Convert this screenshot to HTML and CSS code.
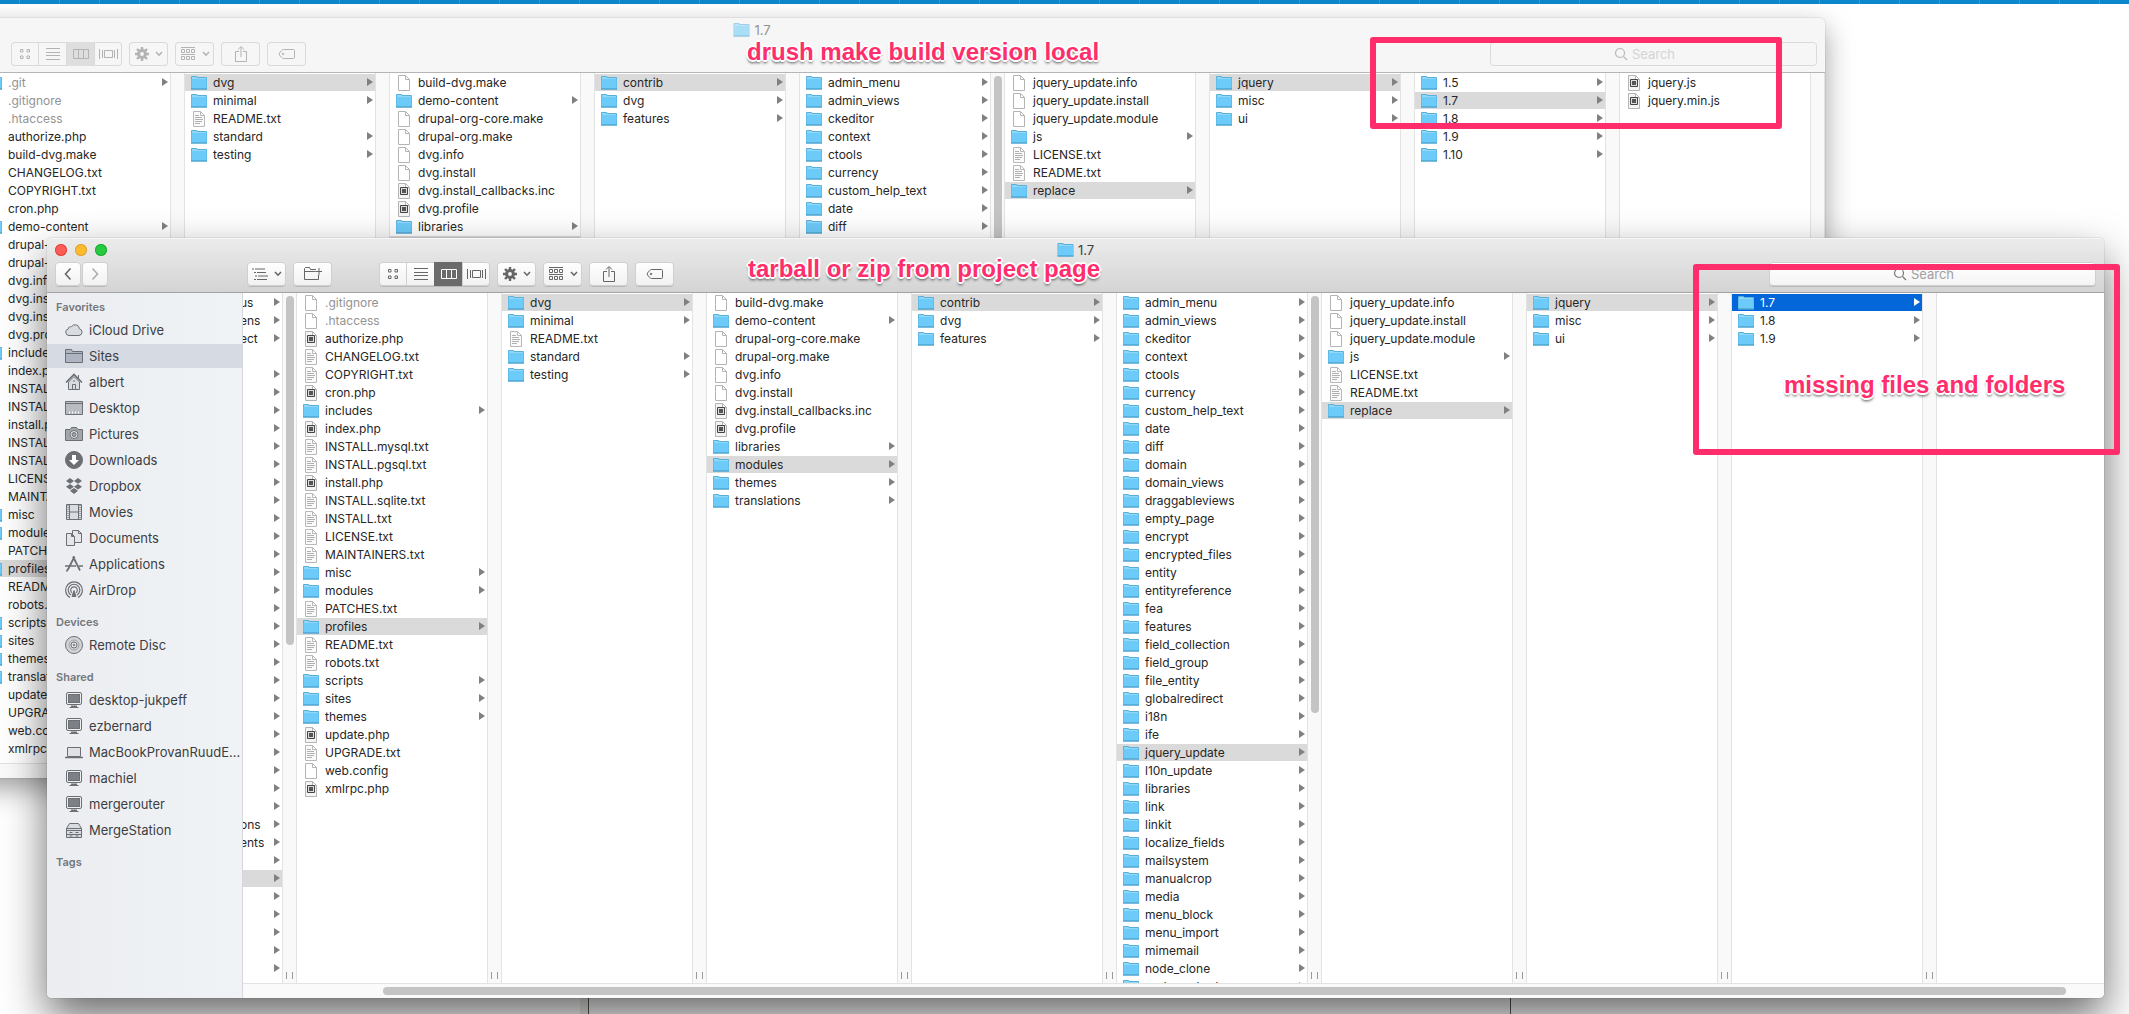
FILE: index.html
```
<!DOCTYPE html>
<html lang="en">
<head>
<meta charset="utf-8">
<meta name="viewport" content="width=device-width, initial-scale=1">
<title>1.7</title>
<link rel="stylesheet" href="styles.css">
</head>
<body>
<svg class="symbols" aria-hidden="true">
  <symbol id="i-grid" viewBox="0 0 12 12"><path d="M1.5 1.5h2.500v2.500h-2.500zM8 1.500h2.500v2.500h-2.500zM1.500 8h2.500v2.500h-2.500zM8 8h2.500v2.500h-2.500z"/></symbol>
  <symbol id="i-list" viewBox="0 0 14 12"><path d="M0 .5h14M0 4.500h14M0 7.500h14M0 11.500h14"/></symbol>
  <symbol id="i-columns" viewBox="0 0 16 12"><path d="M.5 1.500h15v9H.5zM5.500 1.500v9M10.500 1.500v9"/></symbol>
  <symbol id="i-flow" viewBox="0 0 20 12"><path d="M5.500 2.500h8v7h-8zM.5 1v10M3.500 2v8M18.500 1v10M15.500 2v8"/></symbol>
  <symbol id="i-gear" viewBox="0 0 14 14"><circle cx="7" cy="7" r="3.400" stroke-width="3"/><path stroke-width="2.400" d="M7 0v3M7 11v3M0 7h3M11 7h3M2 2l2.200 2.200M9.800 9.800L12 12M12 2L9.800 4.200M4.200 9.800L2 12"/></symbol>
  <symbol id="i-group" viewBox="0 0 16 14"><path d="M1 .5h14M1 7.500h14M1.500 2.500h3v3h-3zM6.500 2.500h3v3h-3zM11.500 2.500h3v3h-3zM1.500 9.500h3v3h-3zM6.500 9.500h3v3h-3zM11.500 9.500h3v3h-3z"/></symbol>
  <symbol id="i-share" viewBox="0 0 12 16"><path d="M4 5.500H.5v10h11v-10H8M6 11V1M3 3.500l3-3 3 3"/></symbol>
  <symbol id="i-tag" viewBox="0 0 18 12"><path d="M5.500 1.500h10q1 0 1 1v7q0 1-1 1h-10q-1 0-2-1.200l-2-2.300q-.5-1 0-2l2-2.300q1-1.200 2-1.200z"/><circle cx="5" cy="6" r=".8"/></symbol>
  <symbol id="i-down" viewBox="0 0 8 6"><path stroke-width="1.600" d="M1 1l3 3.200L7 1"/></symbol>
  <symbol id="i-arrange" viewBox="0 0 16 12"><path d="M0 1h2M3 1h10M2 4.500h2M5 4.500h9M3 8h2M6 8h10M2 11.500h2M5 11.500h10"/></symbol>
  <symbol id="i-newfolder" viewBox="0 0 18 14"><path d="M12 2.500H6.500l-1-2h-4l-1 1v11h14V8M.5 4.500h11M15 1v7M11.500 4.500h6.500"/></symbol>
  <symbol id="i-back" viewBox="0 0 8 14"><path stroke-width="1.600" d="M6.500 1.500L1.500 7l5 5.500"/></symbol>
  <symbol id="i-forward" viewBox="0 0 8 14"><path stroke-width="1.600" d="M1.500 1.500l5 5.500-5 5.500"/></symbol>

  <symbol id="s-cloud" viewBox="0 0 18 18"><path fill="#d9dce0" d="M4 14.500a3.300 3.300 0 0 1-.8-6.500 2.500 2.500 0 0 1 3.300-2.300 4.300 4.300 0 0 1 7.900 2.100 3.400 3.400 0 0 1-.4 6.700z"/></symbol>
  <symbol id="s-folder" viewBox="0 0 18 18"><path fill="#aeb5c2" d="M.5 15.500v-13h6l1 2h10v11zM.5 6.500h17"/></symbol>
  <symbol id="s-home" viewBox="0 0 18 18"><path fill="#d9dce0" d="M3.500 9v7.500h11V9L9 3.500z"/><path stroke-width="1.600" d="M1 9.500l8-8 8 8"/><path d="M13.500 2v4M7.500 16.500v-5h3v5M8 8h2"/></symbol>
  <symbol id="s-desktop" viewBox="0 0 18 18"><path fill="#b9bcc1" d="M.5 2.500h17v13H.5zM.5 4.500h17"/><path d="M4.500 14.500v-2M7.500 14.500v-2M10.500 14.500v-2M13.500 14.500v-2" stroke="#fff"/></symbol>
  <symbol id="s-camera" viewBox="0 0 18 18"><path fill="#a2a5aa" d="M.5 4.500h4.500l1.500-2h5l1.500 2h4.500v11H.5z"/><circle cx="9" cy="9.500" r="4" fill="#e6e8eb"/><circle cx="9" cy="9.500" r="2" fill="#a2a5aa"/></symbol>
  <symbol id="s-download" viewBox="0 0 18 18"><circle cx="9" cy="9" r="8.500" fill="#6c6f74"/><path fill="#fff" stroke="none" d="M7 4h4v5h3l-5 5-5-5h3z"/></symbol>
  <symbol id="s-dropbox" viewBox="0 0 18 18"><path fill="#6c6f74" stroke="none" d="M5 1l4 3-4 2.800L1 4zM13 1l4 3-4 2.800L9 4zM5 12.500L1 9.700 5 7l4 2.700zM13 12.500L9 9.700 13 7l4 2.700zM9 11l4 2.700L9 17l-4-3.300z"/></symbol>
  <symbol id="s-movie" viewBox="0 0 18 18"><path fill="#d9dce0" d="M1.500 1.500h15v15h-15zM4.500 1.500v15M13.500 1.500v15M4.500 9h9"/><path stroke-dasharray="1 1" d="M3 2v14M15 2v14"/></symbol>
  <symbol id="s-docs" viewBox="0 0 18 18"><path fill="#e4e6e9" d="M7.500 13.500v-12h6l3 3v9zM13.500 1.500v3h3"/><path fill="#e4e6e9" d="M1.500 16.500v-12h5l3 3v9zM6.500 4.500v3h3"/></symbol>
  <symbol id="s-apps" viewBox="0 0 18 18"><path stroke-width="1.800" d="M9.500 1.500L3 14.500M8 1.500l7 14"/><path stroke-width="1.500" d="M0 11h11M14 11h4M1.500 16.500L3 14"/></symbol>
  <symbol id="s-airdrop" viewBox="0 0 18 18"><path stroke-width="1.200" d="M5 16.500a8.300 8.300 0 1 1 8 0M6 14a5.800 5.800 0 1 1 6 0M7 11.800a3.300 3.300 0 1 1 4 0"/><path fill="#6c6f74" d="M9 9.500l2 6H7z"/></symbol>
  <symbol id="s-disc" viewBox="0 0 18 18"><circle cx="9" cy="9" r="8.500" fill="#d2d4d8"/><circle cx="9" cy="9" r="5" stroke="#a0a3a8"/><circle cx="9" cy="9" r="3" fill="#f2f3f5"/><circle cx="9" cy="9" r="1"/></symbol>
  <symbol id="s-monitor" viewBox="0 0 18 18"><rect x="1.500" y="1.500" width="15" height="12" rx="1.500" fill="#eceef0"/><rect x="3.500" y="3.500" width="11" height="8" fill="#7d8086"/><path stroke-width="2" d="M6 15.500h6"/><path d="M4.500 16.500h9"/></symbol>
  <symbol id="s-laptop" viewBox="0 0 18 18"><path fill="#dfe1e5" d="M2.500 4.500h13v9h-13z"/><path stroke-width="1.500" d="M0 14.500h18"/></symbol>
  <symbol id="s-server" viewBox="0 0 18 18"><path fill="#d9dce0" d="M1.500 16.500v-9l3-5h9l3 5v9zM1.500 7.500h15M1.500 9.500h15M1.500 13.500h15"/><path d="M4.500 11.500h3M10.500 11.500h3M4.500 15h3M10.500 15h3"/></symbol>
</svg>

<div class="desktop">
  <div class="banner"></div>
  <div class="page-edge"></div>

  <section class="window inactive" aria-label="Build window">
    <header class="toolbar">
      <div class="titlebar"><span></span><h1 class="title folder">1.7</h1><span></span></div>
      <div class="tools">
        <div class="segments">
          <button aria-label="Icons"><svg width="12" height="12"><use href="#i-grid"/></svg></button>
          <button aria-label="List"><svg width="14" height="12"><use href="#i-list"/></svg></button>
          <button aria-label="Columns" class="on"><svg width="16" height="12"><use href="#i-columns"/></svg></button>
          <button aria-label="Cover flow"><svg width="20" height="12"><use href="#i-flow"/></svg></button>
        </div>
        <button class="tool" aria-label="Action"><svg width="14" height="14"><use href="#i-gear"/></svg><svg width="8" height="6"><use href="#i-down"/></svg></button>
        <button class="tool" aria-label="Group"><svg width="16" height="14"><use href="#i-group"/></svg><svg width="8" height="6"><use href="#i-down"/></svg></button>
        <button class="tool" aria-label="Share"><svg width="12" height="16"><use href="#i-share"/></svg></button>
        <button class="tool" aria-label="Tags"><svg width="18" height="12"><use href="#i-tag"/></svg></button>
        <input class="search" type="search" placeholder="Search" aria-label="Search">
      </div>
    </header>
    <div class="content">
      <div class="browser">
        <div class="columns">
          <div class="column">
            <ul>
              <li class="folder dim">.git</li><li class="doc dim">.gitignore</li><li class="doc dim">.htaccess</li><li class="code">authorize.php</li><li class="doc">build-dvg.make</li><li class="txt">CHANGELOG.txt</li><li class="txt">COPYRIGHT.txt</li><li class="code">cron.php</li><li class="folder">demo-content</li><li class="doc">drupal-org-core.make</li><li class="doc">drupal-org.make</li><li class="doc">dvg.info</li><li class="doc">dvg.install</li><li class="code">dvg.install_callbacks.inc</li><li class="code">dvg.profile</li><li class="folder">includes</li><li class="code">index.php</li><li class="txt">INSTALL.mysql.txt</li><li class="txt">INSTALL.pgsql.txt</li><li class="code">install.php</li><li class="txt">INSTALL.sqlite.txt</li><li class="txt">INSTALL.txt</li><li class="txt">LICENSE.txt</li><li class="txt">MAINTAINERS.txt</li><li class="folder">misc</li><li class="folder">modules</li><li class="txt">PATCHES.txt</li><li class="folder selected">profiles</li><li class="txt">README.txt</li><li class="txt">robots.txt</li><li class="folder">scripts</li><li class="folder">sites</li><li class="folder">themes</li><li class="folder">translations</li><li class="code">update.php</li><li class="txt">UPGRADE.txt</li><li class="doc">web.config</li><li class="code">xmlrpc.php</li>
            </ul>
            <div class="gutter"></div>
          </div>
          <div class="column">
            <ul>
              <li class="folder selected">dvg</li><li class="folder">minimal</li><li class="txt">README.txt</li><li class="folder">standard</li><li class="folder">testing</li>
            </ul>
            <div class="gutter"></div>
          </div>
          <div class="column">
            <ul>
              <li class="doc">build-dvg.make</li><li class="folder">demo-content</li><li class="doc">drupal-org-core.make</li><li class="doc">drupal-org.make</li><li class="doc">dvg.info</li><li class="doc">dvg.install</li><li class="code">dvg.install_callbacks.inc</li><li class="code">dvg.profile</li><li class="folder">libraries</li><li class="folder selected">modules</li>
            </ul>
            <div class="gutter"></div>
          </div>
          <div class="column">
            <ul>
              <li class="folder selected">contrib</li><li class="folder">dvg</li><li class="folder">features</li>
            </ul>
            <div class="gutter"></div>
          </div>
          <div class="column">
            <ul>
              <li class="folder">admin_menu</li><li class="folder">admin_views</li><li class="folder">ckeditor</li><li class="folder">context</li><li class="folder">ctools</li><li class="folder">currency</li><li class="folder">custom_help_text</li><li class="folder">date</li><li class="folder">diff</li><li class="folder">domain</li>
            </ul>
            <div class="gutter"><div class="thumb"></div></div>
          </div>
          <div class="column">
            <ul>
              <li class="doc">jquery_update.info</li><li class="doc">jquery_update.install</li><li class="doc">jquery_update.module</li><li class="folder">js</li><li class="txt">LICENSE.txt</li><li class="txt">README.txt</li><li class="folder selected">replace</li>
            </ul>
            <div class="gutter"></div>
          </div>
          <div class="column">
            <ul>
              <li class="folder selected">jquery</li><li class="folder">misc</li><li class="folder">ui</li>
            </ul>
            <div class="gutter"></div>
          </div>
          <div class="column">
            <ul>
              <li class="folder">1.5</li><li class="folder selected">1.7</li><li class="folder">1.8</li><li class="folder">1.9</li><li class="folder">1.10</li>
            </ul>
            <div class="gutter"></div>
          </div>
          <div class="column">
            <ul>
              <li class="code">jquery.js</li><li class="code">jquery.min.js</li>
            </ul>
            <div class="gutter"></div>
          </div>
        </div>
        <div class="scrollbar"></div>
      </div>
    </div>
  </section>

  <section class="window active" aria-label="Project page window">
    <header class="toolbar">
      <div class="titlebar">
        <div class="lights"><button class="close" aria-label="Close"></button><button class="minimize" aria-label="Minimize"></button><button class="zoom" aria-label="Zoom"></button></div>
        <h1 class="title folder">1.7</h1><span></span>
      </div>
      <div class="tools">
        <div class="history">
          <button class="nav" aria-label="Back"><svg width="8" height="14"><use href="#i-back"/></svg></button>
          <button class="nav off" aria-label="Forward"><svg width="8" height="14"><use href="#i-forward"/></svg></button>
        </div>
        <div class="pair">
          <button class="tool" aria-label="Arrange"><svg width="16" height="12"><use href="#i-arrange"/></svg><svg width="8" height="6"><use href="#i-down"/></svg></button>
          <button class="tool" aria-label="New folder"><svg width="18" height="14"><use href="#i-newfolder"/></svg></button>
        </div>
        <div class="segments">
          <button aria-label="Icons"><svg width="12" height="12"><use href="#i-grid"/></svg></button>
          <button aria-label="List"><svg width="14" height="12"><use href="#i-list"/></svg></button>
          <button aria-label="Columns" class="on"><svg width="16" height="12"><use href="#i-columns"/></svg></button>
          <button aria-label="Cover flow"><svg width="20" height="12"><use href="#i-flow"/></svg></button>
        </div>
        <button class="tool" aria-label="Action"><svg width="14" height="14"><use href="#i-gear"/></svg><svg width="8" height="6"><use href="#i-down"/></svg></button>
        <button class="tool" aria-label="Group"><svg width="16" height="14"><use href="#i-group"/></svg><svg width="8" height="6"><use href="#i-down"/></svg></button>
        <button class="tool" aria-label="Share"><svg width="12" height="16"><use href="#i-share"/></svg></button>
        <button class="tool" aria-label="Tags"><svg width="18" height="12"><use href="#i-tag"/></svg></button>
        <input class="search" type="search" placeholder="Search" aria-label="Search">
      </div>
    </header>
    <div class="content">
      <nav class="sidebar">
        <h2>Favorites</h2>
        <a href="#"><svg><use href="#s-cloud"/></svg><span>iCloud Drive</span></a>
        <a href="#" class="current"><svg><use href="#s-folder"/></svg><span>Sites</span></a>
        <a href="#"><svg><use href="#s-home"/></svg><span>albert</span></a>
        <a href="#"><svg><use href="#s-desktop"/></svg><span>Desktop</span></a>
        <a href="#"><svg><use href="#s-camera"/></svg><span>Pictures</span></a>
        <a href="#"><svg><use href="#s-download"/></svg><span>Downloads</span></a>
        <a href="#"><svg><use href="#s-dropbox"/></svg><span>Dropbox</span></a>
        <a href="#"><svg><use href="#s-movie"/></svg><span>Movies</span></a>
        <a href="#"><svg><use href="#s-docs"/></svg><span>Documents</span></a>
        <a href="#"><svg><use href="#s-apps"/></svg><span>Applications</span></a>
        <a href="#"><svg><use href="#s-airdrop"/></svg><span>AirDrop</span></a>
        <h2>Devices</h2>
        <a href="#"><svg><use href="#s-disc"/></svg><span>Remote Disc</span></a>
        <h2>Shared</h2>
        <a href="#"><svg><use href="#s-monitor"/></svg><span>desktop-jukpeff</span></a>
        <a href="#"><svg><use href="#s-monitor"/></svg><span>ezbernard</span></a>
        <a href="#"><svg><use href="#s-laptop"/></svg><span>MacBookProvanRuudE...</span></a>
        <a href="#"><svg><use href="#s-monitor"/></svg><span>machiel</span></a>
        <a href="#"><svg><use href="#s-monitor"/></svg><span>mergerouter</span></a>
        <a href="#"><svg><use href="#s-server"/></svg><span>MergeStation</span></a>
        <h2>Tags</h2>
      </nav>
      <div class="browser">
        <div class="columns">
          <div class="column scrolled">
            <ul>
              <li class="folder">us</li><li class="folder">ens</li><li class="folder">ect</li><li></li><li class="folder"></li><li class="folder"></li><li class="folder"></li><li class="folder"></li><li class="folder"></li><li class="folder"></li><li class="folder"></li><li class="folder"></li><li class="folder"></li><li class="folder"></li><li class="folder"></li><li class="folder"></li><li class="folder"></li><li class="folder"></li><li class="folder"></li><li class="folder"></li><li class="folder"></li><li class="folder"></li><li class="folder"></li><li class="folder"></li><li class="folder"></li><li class="folder"></li><li class="folder"></li><li class="folder"></li><li class="folder"></li><li class="folder">ons</li><li class="folder">ents</li><li class="folder"></li><li class="folder selected"></li><li class="folder"></li><li class="folder"></li><li class="folder"></li><li class="folder"></li><li class="folder"></li>
            </ul>
            <div class="gutter"><div class="thumb short"></div></div>
          </div>
          <div class="column">
            <ul>
              <li class="doc dim">.gitignore</li><li class="doc dim">.htaccess</li><li class="code">authorize.php</li><li class="txt">CHANGELOG.txt</li><li class="txt">COPYRIGHT.txt</li><li class="code">cron.php</li><li class="folder">includes</li><li class="code">index.php</li><li class="txt">INSTALL.mysql.txt</li><li class="txt">INSTALL.pgsql.txt</li><li class="code">install.php</li><li class="txt">INSTALL.sqlite.txt</li><li class="txt">INSTALL.txt</li><li class="txt">LICENSE.txt</li><li class="txt">MAINTAINERS.txt</li><li class="folder">misc</li><li class="folder">modules</li><li class="txt">PATCHES.txt</li><li class="folder selected">profiles</li><li class="txt">README.txt</li><li class="txt">robots.txt</li><li class="folder">scripts</li><li class="folder">sites</li><li class="folder">themes</li><li class="code">update.php</li><li class="txt">UPGRADE.txt</li><li class="doc">web.config</li><li class="code">xmlrpc.php</li>
            </ul>
            <div class="gutter"></div>
          </div>
          <div class="column">
            <ul>
              <li class="folder selected">dvg</li><li class="folder">minimal</li><li class="txt">README.txt</li><li class="folder">standard</li><li class="folder">testing</li>
            </ul>
            <div class="gutter"></div>
          </div>
          <div class="column">
            <ul>
              <li class="doc">build-dvg.make</li><li class="folder">demo-content</li><li class="doc">drupal-org-core.make</li><li class="doc">drupal-org.make</li><li class="doc">dvg.info</li><li class="doc">dvg.install</li><li class="code">dvg.install_callbacks.inc</li><li class="code">dvg.profile</li><li class="folder">libraries</li><li class="folder selected">modules</li><li class="folder">themes</li><li class="folder">translations</li>
            </ul>
            <div class="gutter"></div>
          </div>
          <div class="column">
            <ul>
              <li class="folder selected">contrib</li><li class="folder">dvg</li><li class="folder">features</li>
            </ul>
            <div class="gutter"></div>
          </div>
          <div class="column">
            <ul>
              <li class="folder">admin_menu</li><li class="folder">admin_views</li><li class="folder">ckeditor</li><li class="folder">context</li><li class="folder">ctools</li><li class="folder">currency</li><li class="folder">custom_help_text</li><li class="folder">date</li><li class="folder">diff</li><li class="folder">domain</li><li class="folder">domain_views</li><li class="folder">draggableviews</li><li class="folder">empty_page</li><li class="folder">encrypt</li><li class="folder">encrypted_files</li><li class="folder">entity</li><li class="folder">entityreference</li><li class="folder">fea</li><li class="folder">features</li><li class="folder">field_collection</li><li class="folder">field_group</li><li class="folder">file_entity</li><li class="folder">globalredirect</li><li class="folder">i18n</li><li class="folder">ife</li><li class="folder selected">jquery_update</li><li class="folder">l10n_update</li><li class="folder">libraries</li><li class="folder">link</li><li class="folder">linkit</li><li class="folder">localize_fields</li><li class="folder">mailsystem</li><li class="folder">manualcrop</li><li class="folder">media</li><li class="folder">menu_block</li><li class="folder">menu_import</li><li class="folder">mimemail</li><li class="folder">node_clone</li><li class="folder">node_embed</li>
            </ul>
            <div class="gutter"><div class="thumb"></div></div>
          </div>
          <div class="column">
            <ul>
              <li class="doc">jquery_update.info</li><li class="doc">jquery_update.install</li><li class="doc">jquery_update.module</li><li class="folder">js</li><li class="txt">LICENSE.txt</li><li class="txt">README.txt</li><li class="folder selected">replace</li>
            </ul>
            <div class="gutter"></div>
          </div>
          <div class="column">
            <ul>
              <li class="folder selected">jquery</li><li class="folder">misc</li><li class="folder">ui</li>
            </ul>
            <div class="gutter"></div>
          </div>
          <div class="column">
            <ul>
              <li class="folder focused">1.7</li><li class="folder">1.8</li><li class="folder">1.9</li>
            </ul>
            <div class="gutter"></div>
          </div>
        </div>
        <div class="scrollbar"><div class="thumb"></div></div>
      </div>
    </div>
  </section>

  <p class="note note-build">drush make build version local</p>
  <p class="note note-tarball">tarball or zip from project page</p>
  <p class="note note-missing">missing files and folders</p>
  <div class="frame frame-build"></div>
  <div class="frame frame-missing"></div>
</div>
</body>
</html>
```
FILE: styles.css
```
:root {
  --pink: #ff2d6b;
  --line: #e3e3e3;
  --folder: url("data:image/svg+xml,%3Csvg xmlns='http://www.w3.org/2000/svg' viewBox='0 0 16 16'%3E%3Cpath fill='%2357b0dc' d='M0 2q0-1 1-1h4q1 0 1.500 1H15q1 0 1 1v11.500H0z'/%3E%3Cpath fill='%2391d8f7' d='M1 2h4.500l.5 1h9v1H1z'/%3E%3Cpath fill='%236ccbf8' d='M.5 4h15v9.500H.5z'/%3E%3Cpath fill='%234a9fcc' d='M0 13.500h16v1H0z'/%3E%3C/svg%3E");
  --doc: url("data:image/svg+xml,%3Csvg xmlns='http://www.w3.org/2000/svg' viewBox='0 0 16 16'%3E%3Cpath fill='%23fff' stroke='%23b4b4b4' d='M2.500.5h7l4 4v11h-11zM9.500.5v4h4'/%3E%3C/svg%3E");
  --txt: url("data:image/svg+xml,%3Csvg xmlns='http://www.w3.org/2000/svg' viewBox='0 0 16 16'%3E%3Cpath fill='%23fafafa' stroke='%23b8b8b8' d='M2.500.5h7l4 4v11h-11zM9.500.5v4h4'/%3E%3Cpath stroke='%23b0b0b0' d='M4 4.500h4M4 6.500h7M4 8.500h8M4 10.500h7M4 12.500h5'/%3E%3C/svg%3E");
  --code: url("data:image/svg+xml,%3Csvg xmlns='http://www.w3.org/2000/svg' viewBox='0 0 16 16'%3E%3Cpath fill='%23f4f4f4' stroke='%23b4b4b4' d='M2.500.5h7l4 4v11h-11zM9.500.5v4h4'/%3E%3Cpath fill='%23ddd' stroke='%23444' d='M4.500 4.500h7v7h-7z'/%3E%3Cpath fill='%23555' d='M6 6h4v4H6z'/%3E%3C/svg%3E");
  --lens: url("data:image/svg+xml,%3Csvg xmlns='http://www.w3.org/2000/svg' viewBox='0 0 14 14'%3E%3Cg fill='none' stroke='%23777' stroke-width='1.200'%3E%3Ccircle cx='6' cy='6' r='4.500'/%3E%3Cpath d='M9.500 9.500l3.500 3.500'/%3E%3C/g%3E%3C/svg%3E");
  --lens-light: url("data:image/svg+xml,%3Csvg xmlns='http://www.w3.org/2000/svg' viewBox='0 0 14 14'%3E%3Cg fill='none' stroke='%23b8b8b8' stroke-width='1.200'%3E%3Ccircle cx='6' cy='6' r='4.500'/%3E%3Cpath d='M9.500 9.500l3.500 3.500'/%3E%3C/g%3E%3C/svg%3E");
}

* { box-sizing: border-box; }

body {
  margin: 0;
  background: #fff;
  color: #262626;
  font: 12px/17px Inter, "Liberation Sans", sans-serif;
}

h1, h2, p, ul { margin: 0; padding: 0; font-size: inherit; font-weight: 400; }
ul { list-style: none; }
button { padding: 0; border: 0; background: none; font: inherit; }

svg { fill: none; stroke: #666; }
.symbols { position: absolute; width: 0; height: 0; }

.desktop { position: relative; height: 100vh; min-height: 600px; overflow: hidden; }

.banner {
  height: 4px;
  background: repeating-linear-gradient(90deg, #0d87cb 0 19px, #2d9ddc 19px 20px, #0d87cb 20px 40px);
}

/* page showing below the windows */
.page-edge {
  position: absolute;
  inset: auto 618px 0 580px;
  height: 16px;
  border: solid #555;
  border-width: 0 1px 0 0;
  background: linear-gradient(90deg, #eeeeea 8px, #555 8px 9px, transparent 9px);
}

/* windows */
.window {
  position: absolute;
  display: flex;
  flex-direction: column;
  border-radius: 5px;
}
.window.inactive {
  inset: 18px 304px 236px -321px;
  box-shadow: 0 0 1px rgba(0, 0, 0, .5), 0 10px 28px rgba(0, 0, 0, .38);
}
.window.active {
  inset: 238px 25px 16px 47px;
  box-shadow: 0 0 1px rgba(0, 0, 0, .6), 0 20px 44px rgba(0, 0, 0, .58);
}

.toolbar {
  height: 55px;
  border-bottom: 1px solid #a3a3a3;
  border-radius: 5px 5px 0 0;
  background: linear-gradient(#ececec, #d4d4d4);
  box-shadow: inset 0 1px #f6f6f6;
}
.inactive .toolbar { background: #f6f6f6; border-color: #b5b5b5; }

.titlebar {
  display: grid;
  grid-template-columns: 1fr auto 1fr;
  align-items: center;
  height: 24px;
  padding: 0 8px;
}
.title {
  padding-left: 21px;
  background: var(--folder) 0 50% / 17px 16px no-repeat;
  color: #404040;
  font-size: 13px;
}
.inactive .title { opacity: .55; }

.lights { display: flex; gap: 8px; }
.lights button { width: 12px; height: 12px; border-radius: 50%; }
.close { background: #fc5b57; box-shadow: inset 0 0 0 1px #e2463f; }
.minimize { background: #fdbc2e; box-shadow: inset 0 0 0 1px #e0a032; }
.zoom { background: #27c93f; box-shadow: inset 0 0 0 1px #1fae33; }

.lights .close { background: #fc5b57; }
.lights .minimize { background: #fdbc2e; }
.lights .zoom { background: #27c93f; }

.tools { display: flex; gap: 7px; height: 24px; padding: 0 8px; }
.inactive .tools { padding-left: 332px; }
.history { display: flex; gap: 1px; width: 185px; }
.pair { display: flex; gap: 7px; width: 125px; }

.tool, .nav, .segments {
  display: flex;
  align-items: center;
  justify-content: center;
  gap: 6px;
  width: 39px;
  height: 24px;
  border-radius: 4px;
  background: linear-gradient(#fff, #f1f1f1);
  box-shadow: 0 0 0 1px #cfcfcf inset, 0 1px #b9b9b9;
}
.nav { width: 26px; }
.nav.off svg { opacity: .5; }
.segments { width: 111px; gap: 0; overflow: hidden; align-items: stretch; }
.segments button {
  flex: 1;
  display: flex;
  align-items: center;
  justify-content: center;
  border-left: 1px solid #cfcfcf;
}
.segments button:first-child { border: 0; }
.segments .on { background: #6b6b6b; border-color: #6b6b6b; }
.active .segments .on svg { stroke: #fff; }

.inactive .tools svg { stroke: #b3b3b3; }
.inactive .tool, .inactive .segments { background: #f6f6f6; box-shadow: 0 0 0 1px #dadada inset; }
.inactive .segments button { border-color: #dadada; }
.inactive .segments .on { background: #dedede; }

.search {
  appearance: none;
  width: 327px;
  height: 24px;
  margin-left: auto;
  padding: 0;
  border: 0;
  border-radius: 4px;
  background: var(--lens) calc(50% - 33px) 50% / 14px 14px no-repeat, linear-gradient(#fff, #f4f4f4);
  box-shadow: 0 0 0 1px #cfcfcf inset, 0 1px #b9b9b9;
  font: 13px/24px Inter, "Liberation Sans", sans-serif;
  text-align: center;
}
.search::-webkit-search-cancel-button { display: none; }
.search::placeholder { color: #a0a0a0; opacity: 1; }
.inactive .search {
  background: var(--lens-light) calc(50% - 33px) 50% / 14px 14px no-repeat, #f6f6f6;
  box-shadow: 0 0 0 1px #dadada inset;
}
.inactive .search::placeholder { color: #d4d4d4; }

.content { flex: 1; display: flex; min-height: 0; overflow: hidden; border-radius: 0 0 5px 5px; background: #fff; }
.inactive .content { padding-left: 301px; }

/* sidebar */
.sidebar {
  flex: 0 0 196px;
  padding-top: 5px;
  border-right: 1px solid #d5d7da;
  background: linear-gradient(90deg, #ebedf1, #f0f3f6);
}
.sidebar h2 { padding-left: 9px; color: #73767b; font-size: 11px; font-weight: 600; line-height: 19px; }
.sidebar a + h2 { margin-top: 11px; }
.sidebar a {
  display: flex;
  align-items: center;
  gap: 6px;
  height: 24px;
  margin: 1px 0 2px;
  padding-left: 18px;
  color: #3c3e42;
  font-size: 13px;
  text-decoration: none;
  white-space: nowrap;
}
.sidebar svg { flex: none; width: 18px; height: 18px; stroke: #6c6f74; }
.sidebar .current { background: #d5dae3; }

/* column browser */
.browser { flex: 1; display: flex; flex-direction: column; min-width: 0; }
.columns { flex: 1; display: flex; min-height: 0; overflow: hidden; }
.column { flex: 0 0 205px; display: flex; min-height: 0; }
.column.scrolled { flex-basis: 54px; }
.column ul { flex: 1; min-width: 0; padding-top: 1px; overflow: hidden; }
.column li {
  position: relative;
  height: 17px;
  margin-bottom: 1px;
  padding-left: 28px;
  background-position: 6px 50%;
  background-size: 16px 16px;
  background-repeat: no-repeat;
  white-space: nowrap;
}
.column.scrolled li { padding: 0; background-image: none; text-indent: -3px; }
.column .selected { background-color: #dadada; }
.column .focused { background-color: #0367d9; color: #fff; }
.column .dim { color: #939393; }
.column .folder { background-image: var(--folder); }
.column .doc { background-image: var(--doc); }
.column .txt { background-image: var(--txt); }
.column .code { background-image: var(--code); }

.column .folder::after {
  content: "";
  position: absolute;
  top: 4px;
  right: 2px;
  border: solid transparent;
  border-width: 4px 0 4px 6px;
  border-left-color: #808080;
}
.column .focused::after { border-left-color: #fff; }

.gutter {
  flex: 0 0 15px;
  display: flex;
  flex-direction: column;
  align-items: center;
  justify-content: space-between;
  padding: 3px 0;
  border: solid var(--line);
  border-width: 0 1px;
  background: #f9f9f9;
}
.gutter::after {
  content: "";
  width: 5px;
  height: 7px;
  margin: auto 0 1px;
  border: solid #9a9a9a;
  border-width: 0 1px;
}
.thumb { width: 8px; height: 61%; border-radius: 4px; background: #c4c4c4; }
.thumb.short { height: 51%; }

.scrollbar { flex: 0 0 15px; padding: 3px 38px 3px 140px; border-top: 1px solid var(--line); background: #fafafa; }
.scrollbar .thumb { width: 100%; height: 8px; }

/* annotations */
.note {
  position: absolute;
  color: var(--pink);
  font: bold 24px/28px "Liberation Sans", Arial, sans-serif;
  white-space: nowrap;
  text-shadow: 1px 1px #fff, -1px -1px #fff, 1px -1px #fff, -1px 1px #fff, 2px 0 #fff, -2px 0 #fff, 0 2px #fff, 0 -2px #fff,
    0 3px 3px rgba(0, 0, 0, .7);
}
.note-build { top: 38px; left: 747px; }
.note-tarball { top: 255px; left: 748px; }
.note-missing { top: 371px; left: 1784px; }

.frame { position: absolute; border: 6px solid var(--pink); border-radius: 3px; }
.frame-build { top: 37px; left: 1370px; width: 412px; height: 92px; }
.frame-missing { top: 264px; left: 1693px; width: 427px; height: 191px; }
```
